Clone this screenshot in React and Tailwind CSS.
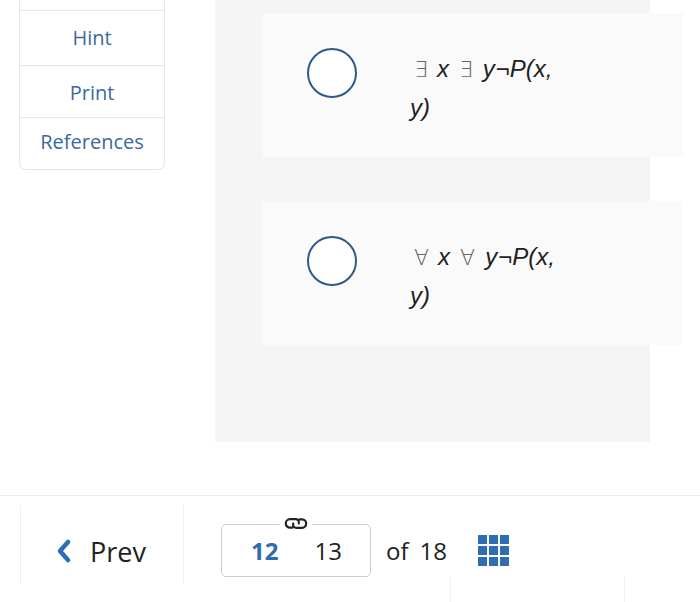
import React from "react";

function Radio() {
  return (
    <div className="w-[50px] h-[50px] shrink-0 rounded-full border-2 border-[#2d5a88] bg-white" />
  );
}

function Q({ q }) {
  return (
    <span className="text-[#666] font-light [font-family:'DejaVu_Sans',sans-serif] text-[22px]">{q}</span>
  );
}

function Formula({ q }) {
  return (
    <div className="text-[24px] leading-[38px] text-[#222] [font-family:'Liberation_Sans',Arial,sans-serif]">
      <div className="whitespace-nowrap">
        <Q q={q} />
        <span className="italic ml-[9px] mr-[10px]">x</span>
        <Q q={q} />
        <span className="italic ml-[10px]">y</span>
        <span className="ml-[1px]">¬</span>
        <span className="italic">P(x,</span>
      </div>
      <div className="italic -ml-[4px]">y)</div>
    </div>
  );
}

function Card({ q, mt }) {
  return (
    <div className={`w-[421px] h-[144px] bg-[#fafafa] flex items-start pl-[45px] pt-[35px] ${mt}`}>
      <Radio />
      <div className="ml-[57px] mt-[2px]">
        <Formula q={q} />
      </div>
    </div>
  );
}

function LinkIcon() {
  return (
    <svg width="24" height="13" viewBox="0 0 24 13" fill="none" stroke="#222" strokeWidth="2.2" strokeLinecap="round">
      <path d="M14 3 A3.5 3.5 0 0 0 11.5 2.2 H6 a4.2 4.2 0 0 0 0 8.4 H8.5" />
      <path d="M10 10 A3.5 3.5 0 0 0 12.5 10.8 H18 a4.2 4.2 0 0 0 0 -8.4 H15.5" />
      <path d="M10 10 A3.5 3.5 0 0 1 9.2 6.5" />
      <path d="M14 3 A3.5 3.5 0 0 1 14.8 6.5" />
    </svg>
  );
}

function GridIcon() {
  const cells = Array.from({ length: 9 });
  return (
    <div className="grid grid-cols-3 gap-[2px] w-[31px] h-[31px]">
      {cells.map((_, i) => (
        <div key={i} className="bg-[#2f6db3]" />
      ))}
    </div>
  );
}

export default function App() {
  return (
    <div className="w-[700px] h-[602px] bg-white overflow-hidden relative [font-family:'Open_Sans',sans-serif]">
      <div className="flex h-[495px]">
        {/* sidebar */}
        <div className="ml-[19px] w-[146px] shrink-0">
          <div className="border-x border-b border-[#e6e6e6] rounded-b-[7px] text-[#3a6a9e] text-[20px] text-center">
            <div className="h-[11px] border-b border-[#e6e6e6]" />
            <div className="h-[55px] flex items-center justify-center border-b border-[#e6e6e6]">Hint</div>
            <div className="h-[52px] flex items-center justify-center border-b border-[#e6e6e6] pt-[2px]">Print</div>
            <div className="h-[51px] flex items-center justify-center pb-[4px]">References</div>
          </div>
        </div>
        {/* main panel */}
        <div className="ml-[50px] w-[435px] h-[442px] bg-[#f5f5f5] shrink-0 pl-[47px] pt-[13px]">
          <Card q="∃" mt="" />
          <Card q="∀" mt="mt-[44px]" />
        </div>
      </div>
      {/* footer */}
      <div className="border-t border-[#ececec] flex pt-[9px]">
        <div className="ml-[20px] w-[164px] h-[80px] border-x border-[#efefef] flex items-center pl-[34px] pt-[12px] shrink-0">
          <svg width="18" height="26" viewBox="0 0 18 26" fill="none" stroke="#2f6db3" strokeWidth="4.5" strokeLinecap="round" strokeLinejoin="round">
            <polyline points="13,4 5,13 13,22" />
          </svg>
          <span className="ml-[17px] text-[27px] text-[#222] leading-none">Prev</span>
        </div>
        <div className="flex flex-col">
          <div className="flex items-center mt-[19px]">
            <div className="ml-[37px] w-[150px] h-[53px] border-[1.5px] border-[#cfcfcf] rounded-[5px] relative flex items-center">
              <div className="absolute left-1/2 -translate-x-1/2 top-[-8px] bg-white px-[4px] flex">
                <LinkIcon />
              </div>
              <span className="ml-[29px] text-[24px] font-bold text-[#2f6db3]">12</span>
              <span className="ml-[36px] text-[24px] text-[#222]">13</span>
            </div>
            <span className="ml-[15px] text-[24px] text-[#222]">of</span>
            <span className="ml-[11px] text-[24px] text-[#222]">18</span>
            <div className="ml-[31px]">
              <GridIcon />
            </div>
          </div>
          <div className="ml-[266px] w-[175px] h-[25px] border-x border-[#efefef]" />
        </div>
      </div>
    </div>
  );
}
